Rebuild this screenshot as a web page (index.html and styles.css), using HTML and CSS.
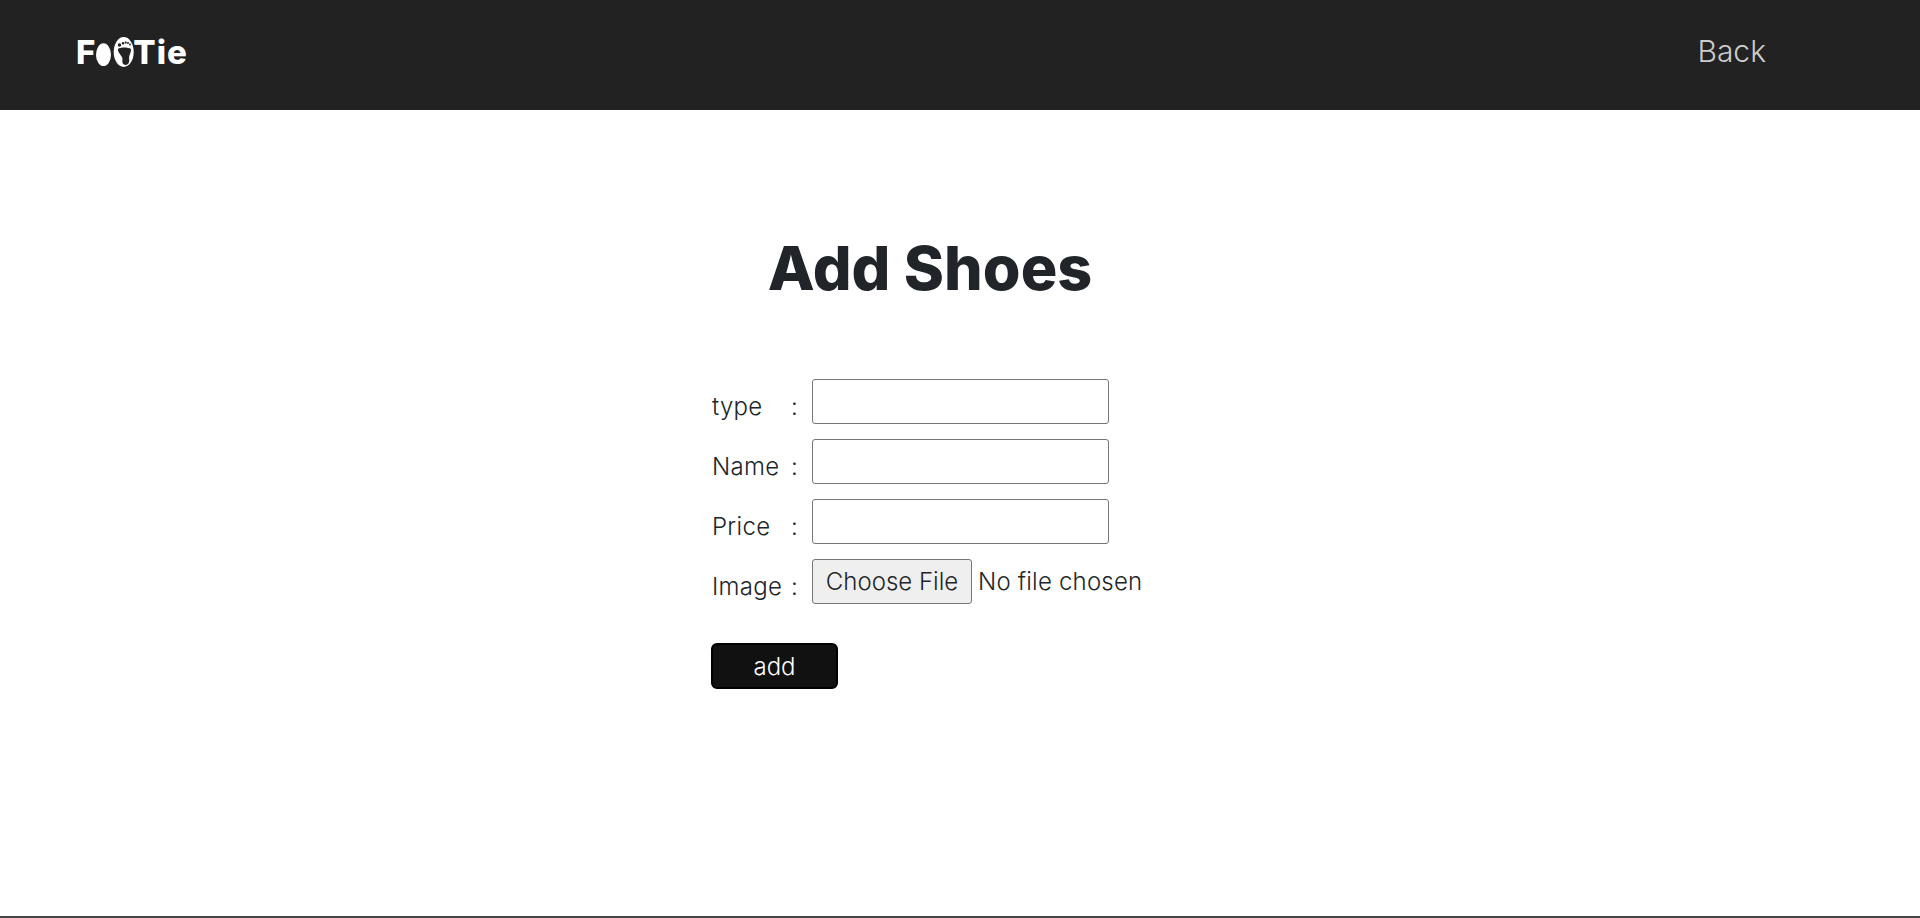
FILE: index.html
```html
<!DOCTYPE html>
<html lang="en">
<head>
    <meta charset="UTF-8">
    <meta name="viewport" content="width=device-width, initial-scale=1.0">
    <title>Add Shoes</title>
    <link rel="stylesheet" href="styles.css">
</head>
<body>
    <header class="navbar">
        <a class="logo" href="#">
            <span>F</span>
            <svg class="logo-feet" width="39" height="30" viewBox="0 0 39 30" aria-hidden="true">
                <ellipse cx="8.500" cy="17.700" rx="7.500" ry="11.400" fill="#fff"/>
                <ellipse cx="28.700" cy="15" rx="10" ry="15" fill="#fff"/>
                <path d="M23 12C25 10 33 10 36 12C36.500 15 34 18 34 21C34.500 24 34.500 27 31 28C27.500 28 27 25 27.500 22C27 18 22.500 16 23 12z" fill="#222"/>
                <circle cx="24.500" cy="8" r="1.700" fill="#222"/>
                <circle cx="28" cy="6.300" r="1.200" fill="#222"/>
                <circle cx="30.700" cy="5.600" r="1.100" fill="#222"/>
                <circle cx="33" cy="6" r="1" fill="#222"/>
                <circle cx="35" cy="7.500" r="0.900" fill="#222"/>
            </svg>
            <span class="logo-end">Tie</span>
        </a>
        <a class="back-link" href="#">Back</a>
    </header>

    <main class="content">
        <h1>Add Shoes</h1>
        <form class="shoe-form">
            <div class="form-row">
                <label for="type"><span>type</span><span>:</span></label>
                <input type="text" id="type">
            </div>
            <div class="form-row">
                <label for="name"><span>Name</span><span>:</span></label>
                <input type="text" id="name">
            </div>
            <div class="form-row">
                <label for="price"><span>Price</span><span>:</span></label>
                <input type="text" id="price">
            </div>
            <div class="form-row">
                <label for="image"><span>Image</span><span>:</span></label>
                <input type="file" id="image">
            </div>
            <button type="button" class="add-btn">add</button>
        </form>
    </main>

    <footer class="page-end"></footer>
</body>
</html>
```

FILE: styles.css
```css
/* Page */
* {
    box-sizing: border-box;
}
body {
    margin: 0;
    min-height: 100vh;
    display: flex;
    flex-direction: column;
    font-family: "Inter", "Liberation Sans", sans-serif;
    font-weight: 300;
    color: #212529;
    background: #fff;
}

/* Navbar */
.navbar {
    height: 110px;
    padding: 0 154px 0 76px;
    display: flex;
    align-items: center;
    justify-content: space-between;
    background: #222;
}
.logo {
    display: flex;
    align-items: center;
    margin-top: -7px;
    color: #fff;
    font-size: 33px;
    font-weight: 800;
    text-decoration: none;
}
.logo-feet {
    margin: 0 -1px 0 0;
}
.logo-end {
    letter-spacing: 1px;
}
.back-link {
    margin-top: -8px;
    color: #ccc;
    font-size: 30px;
    text-decoration: none;
}

/* Form area */
.content {
    flex: 1;
    width: 438px;
    margin-left: 711px;
    padding-top: 123px;
}
h1 {
    margin: 0 0 76px;
    text-align: center;
    font-size: 61px;
    font-weight: 800;
    line-height: 70px;
}
.form-row {
    display: flex;
    align-items: flex-start;
    height: 45px;
    margin-bottom: 15px;
}
label {
    flex: none;
    width: 101px;
    padding: 11px 14px 0 1px;
    display: flex;
    justify-content: space-between;
    font-size: 24px;
    line-height: 33px;
    letter-spacing: 0.3px;
}
input[type="text"] {
    width: 297px;
    height: 45px;
    border: 1px solid #767676;
    border-radius: 3px;
    background: #fff;
}
input[type="file"] {
    flex: none;
    font-family: inherit;
    font-size: 24px;
    font-weight: 300;
    letter-spacing: 0.2px;
    color: #212529;
    white-space: nowrap;
}
input[type="file"]::file-selector-button {
    height: 45px;
    width: 160px;
    margin-right: 6px;
    padding: 0;
    border: 1px solid #767676;
    border-radius: 3px;
    background: #efefef;
    font: inherit;
    color: #212529;
}
.add-btn {
    display: block;
    width: 127px;
    height: 46px;
    margin-top: 39px;
    border: 2px solid #000;
    border-radius: 6px;
    background: #111;
    color: #fff;
    font-family: inherit;
    font-size: 24px;
    font-weight: 300;
}

.page-end {
    height: 2px;
    background: #444;
}
```
